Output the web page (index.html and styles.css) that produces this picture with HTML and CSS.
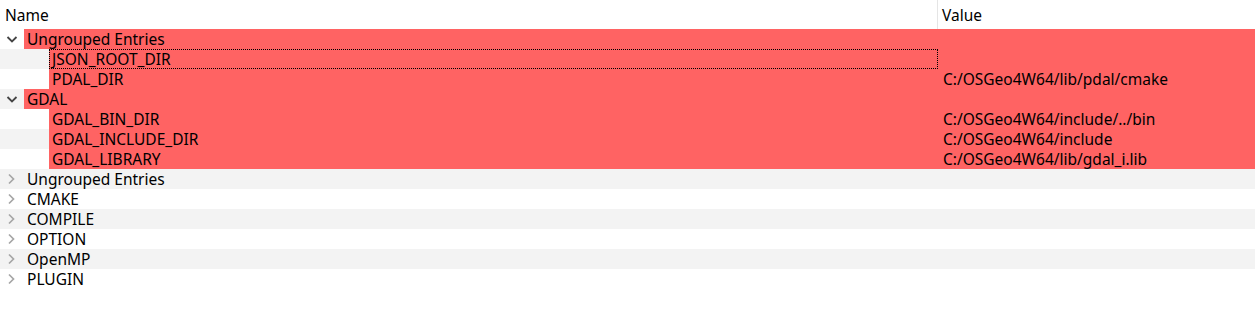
FILE: index.html
```html
<!DOCTYPE html>
<html>
<head>
<meta charset="utf-8">
<link rel="stylesheet" href="styles.css">
</head>
<body>
<div class="tree">
  <div class="header">
    <div class="hname">Name</div>
    <div class="hvalue">Value</div>
  </div>
  <div class="row even">
    <div class="indent top"><svg class="chev" viewBox="0 0 24 20" width="24" height="20"><path d="M7.5 8 L12 12.5 L16.5 8" fill="none" stroke="#444444" stroke-width="1.8"/></svg></div>
    <div class="item red"><div class="name ntop">Ungrouped Entries</div><div class="value"></div></div>
  </div>
  <div class="row odd">
    <div class="indent child"></div>
    <div class="item red"><div class="name nchild focus">JSON_ROOT_DIR</div><div class="value"></div></div>
  </div>
  <div class="row even">
    <div class="indent child"></div>
    <div class="item red"><div class="name nchild">PDAL_DIR</div><div class="value">C:/OSGeo4W64/lib/pdal/cmake</div></div>
  </div>
  <div class="row odd">
    <div class="indent top"><svg class="chev" viewBox="0 0 24 20" width="24" height="20"><path d="M7.5 8 L12 12.5 L16.5 8" fill="none" stroke="#444444" stroke-width="1.8"/></svg></div>
    <div class="item red"><div class="name ntop">GDAL</div><div class="value"></div></div>
  </div>
  <div class="row even">
    <div class="indent child"></div>
    <div class="item red"><div class="name nchild">GDAL_BIN_DIR</div><div class="value">C:/OSGeo4W64/include/../bin</div></div>
  </div>
  <div class="row odd">
    <div class="indent child"></div>
    <div class="item red"><div class="name nchild">GDAL_INCLUDE_DIR</div><div class="value">C:/OSGeo4W64/include</div></div>
  </div>
  <div class="row even">
    <div class="indent child"></div>
    <div class="item red"><div class="name nchild">GDAL_LIBRARY</div><div class="value">C:/OSGeo4W64/lib/gdal_i.lib</div></div>
  </div>
  <div class="row odd">
    <div class="indent top"><svg class="chev" viewBox="0 0 24 20" width="24" height="20"><path d="M9 5.5 L13.5 10 L9 14.5" fill="none" stroke="#a6a6a6" stroke-width="1.7"/></svg></div>
    <div class="item"><div class="name ntop">Ungrouped Entries</div><div class="value"></div></div>
  </div>
  <div class="row even">
    <div class="indent top"><svg class="chev" viewBox="0 0 24 20" width="24" height="20"><path d="M9 5.5 L13.5 10 L9 14.5" fill="none" stroke="#a6a6a6" stroke-width="1.7"/></svg></div>
    <div class="item"><div class="name ntop">CMAKE</div><div class="value"></div></div>
  </div>
  <div class="row odd">
    <div class="indent top"><svg class="chev" viewBox="0 0 24 20" width="24" height="20"><path d="M9 5.5 L13.5 10 L9 14.5" fill="none" stroke="#a6a6a6" stroke-width="1.7"/></svg></div>
    <div class="item"><div class="name ntop">COMPILE</div><div class="value"></div></div>
  </div>
  <div class="row even">
    <div class="indent top"><svg class="chev" viewBox="0 0 24 20" width="24" height="20"><path d="M9 5.5 L13.5 10 L9 14.5" fill="none" stroke="#a6a6a6" stroke-width="1.7"/></svg></div>
    <div class="item"><div class="name ntop">OPTION</div><div class="value"></div></div>
  </div>
  <div class="row odd">
    <div class="indent top"><svg class="chev" viewBox="0 0 24 20" width="24" height="20"><path d="M9 5.5 L13.5 10 L9 14.5" fill="none" stroke="#a6a6a6" stroke-width="1.7"/></svg></div>
    <div class="item"><div class="name ntop">OpenMP</div><div class="value"></div></div>
  </div>
  <div class="row even">
    <div class="indent top"><svg class="chev" viewBox="0 0 24 20" width="24" height="20"><path d="M9 5.5 L13.5 10 L9 14.5" fill="none" stroke="#a6a6a6" stroke-width="1.7"/></svg></div>
    <div class="item"><div class="name ntop">PLUGIN</div><div class="value"></div></div>
  </div>
</div>
</body>
</html>
```
FILE: styles.css
```css
html, body {
  margin: 0;
  padding: 0;
  background: #ffffff;
}
.tree {
  width: 1255px;
  font-family: "Noto Sans", "Open Sans", sans-serif;
  font-size: 15.5px;
  color: #000000;
}
.header {
  display: flex;
  height: 29px;
  line-height: 31px;
}
.hname {
  width: 932px;
  padding-left: 5px;
  border-right: 1px solid #e5e5e5;
}
.hvalue {
  flex: 1;
  padding-left: 4px;
}
.row {
  display: flex;
  height: 20px;
  line-height: 21px;
}
.row.even { background: #ffffff; }
.row.odd { background: #f3f3f3; }
.indent {
  flex: 0 0 auto;
  height: 20px;
}
.indent.top { width: 24px; }
.indent.child { width: 49px; }
.chev { display: block; }
.item {
  flex: 1;
  display: flex;
  min-width: 0;
  height: 20px;
  overflow: hidden;
}
.item.red { background: #ff6363; }
.name {
  flex: 0 0 auto;
  box-sizing: border-box;
  padding-left: 3px;
  white-space: nowrap;
}
.ntop { width: 914px; }
.nchild { width: 889px; }
.focus {
  height: 20px;
  border: 1px dotted #000000;
  padding-left: 2px;
  line-height: 19px;
}
.value {
  flex: 1;
  padding-left: 5px;
  white-space: nowrap;
}
```
